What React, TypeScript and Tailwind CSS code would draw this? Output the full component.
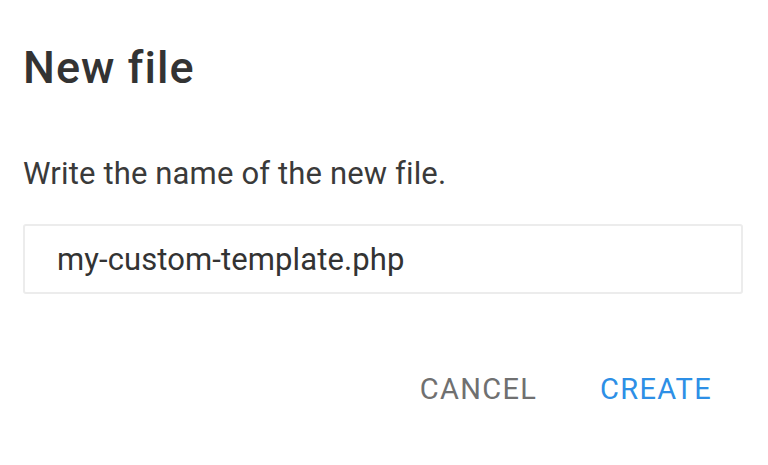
import React, { useState } from 'react';

export default function App() {
    const [name, setName] = useState('my-custom-template.php');

    return (
        <div className="w-[768px] h-[465px] bg-white font-['Roboto',sans-serif] flex flex-col px-[23px]">
            {/* Title */}
            <h1 className="mt-[45px] text-[45px] leading-none font-medium tracking-[1px] text-[#333333]">New file</h1>

            {/* Content */}
            <p className="mt-[68px] text-[31px] leading-none tracking-[0.15px] text-[#3a3a3a]">Write the name of the new file.</p>

            <input
                type="text"
                value={name}
                onChange={(e) => setName(e.target.value)}
                className="mt-[35px] w-[720px] h-[70px] border-2 border-[#ececec] rounded-[3px] px-[32px] text-[31px] tracking-[0.1px] text-[#333333] outline-none"
            />

            {/* Actions */}
            <div className="mt-[81px] flex justify-end gap-[63px] pr-[33px]">
                <button type="button" className="text-[29px] leading-none tracking-[1.3px] text-[#707070] uppercase">
                    Cancel
                </button>
                <button type="button" className="text-[29px] leading-none tracking-[1.3px] text-[#2d8fe6] uppercase">
                    Create
                </button>
            </div>
        </div>
    );
}
